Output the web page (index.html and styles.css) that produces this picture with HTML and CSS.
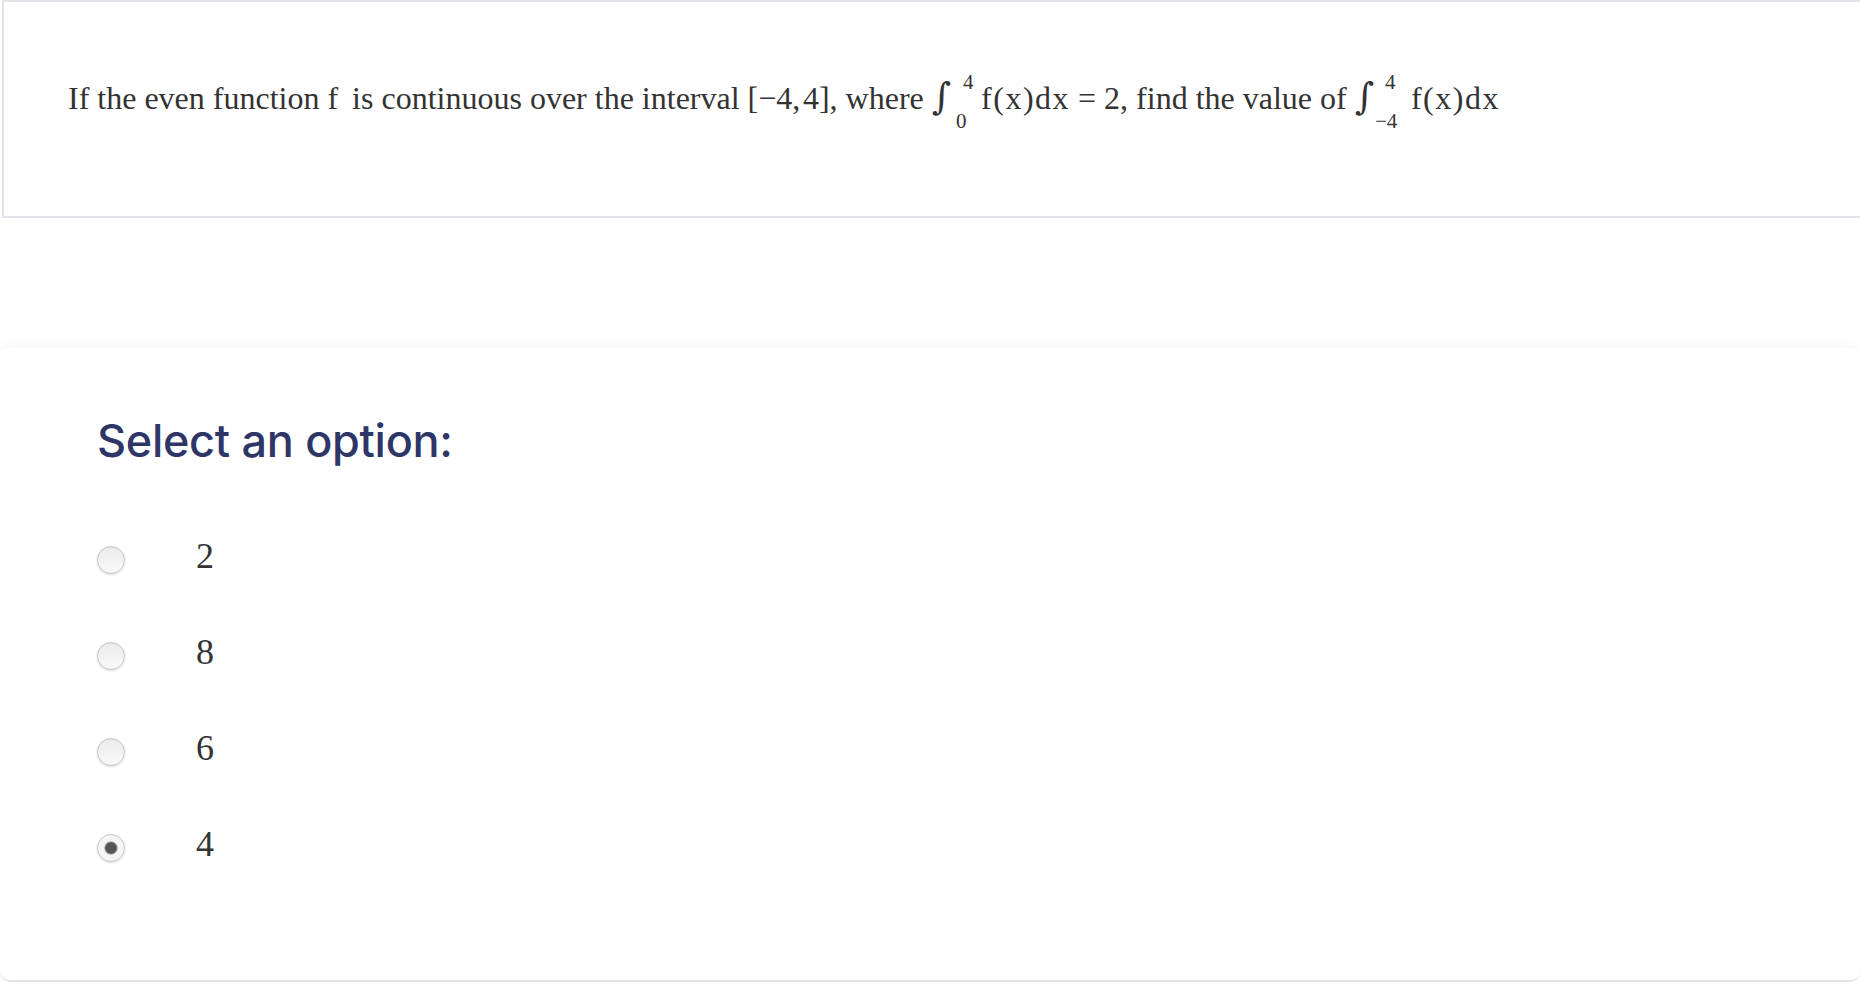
FILE: index.html
```html
<!DOCTYPE html>
<html lang="en">
<head>
    <meta charset="UTF-8">
    <meta name="viewport" content="width=device-width, initial-scale=1.0">
    <title>Question</title>
    <link rel="stylesheet" href="styles.css">
</head>
<body>
    <div class="question">
        <p class="question-text">
            If the even function <span class="fn">f</span> is continuous over the interval [&minus;4,&#8202;4], where
            <span class="int">&int;</span><span class="lim"><span class="sup">4</span><span class="sub">0</span></span><span class="expr">f(x)dx</span> = 2, find the value of
            <span class="int">&int;</span><span class="lim lim-wide"><span class="sup">4</span><span class="sub">&minus;4</span></span><span class="expr">f(x)dx</span>
        </p>
    </div>

    <div class="card">
        <h2 class="card-title">Select an option:</h2>
        <form class="options">
            <label class="option">
                <input type="radio" name="answer" value="2">
                <span class="option-text">2</span>
            </label>
            <label class="option">
                <input type="radio" name="answer" value="8">
                <span class="option-text">8</span>
            </label>
            <label class="option">
                <input type="radio" name="answer" value="6">
                <span class="option-text">6</span>
            </label>
            <label class="option">
                <input type="radio" name="answer" value="4" checked>
                <span class="option-text">4</span>
            </label>
        </form>
    </div>
</body>
</html>
```

FILE: styles.css
```css
html, body {
    margin: 0;
    padding: 0;
    background-color: #ffffff;
    overflow: hidden;
}
body {
    font-family: "Liberation Serif", "Times New Roman", serif;
    color: #333333;
}
.question {
    box-sizing: border-box;
    height: 218px;
    margin-left: 2px;
    border: 2px solid #e1e5e9;
    border-right: none;
    padding: 76px 0 0 64px;
}
.question-text {
    margin: 0;
    font-size: 32px;
    line-height: 40px;
    white-space: nowrap;
    color: #333333;
}
.fn {
    margin-right: 6px;
}
.expr {
    letter-spacing: 1.5px;
}
.int {
    font-family: "DejaVu Serif", serif;
    font-size: 37px;
    line-height: 0;
}
/* integral limits */
.lim {
    display: inline-block;
    position: relative;
    width: 30px;
    height: 10px;
    font-size: 21px;
    line-height: 20px;
}
.lim-wide {
    width: 37px;
}
.lim .sup {
    position: absolute;
    left: 12px;
    top: -27px;
}
.lim .sub {
    position: absolute;
    left: 5px;
    top: 12px;
}
.lim-wide .sup {
    left: 11px;
}
.lim-wide .sub {
    left: 1px;
}
.card {
    box-sizing: border-box;
    height: 634px;
    margin-top: 130px;
    padding: 64px 0 0 97px;
    background-color: #ffffff;
    border-radius: 10px;
    border-bottom: 2px solid #e3e3e3;
    box-shadow: 0 -4px 12px rgba(0, 0, 0, 0.035);
}
.card-title {
    margin: 0;
    font-family: Inter, "Noto Sans", sans-serif;
    font-weight: 500;
    font-size: 45px;
    line-height: 58px;
    letter-spacing: -0.3px;
    color: #2e3667;
}
.options {
    margin-top: 42px;
    display: flex;
    flex-direction: column;
}
.option {
    display: flex;
    align-items: center;
    height: 96px;
    cursor: pointer;
}
.option input {
    -webkit-appearance: none;
    appearance: none;
    margin: 0;
    width: 28px;
    height: 28px;
    border-radius: 50%;
    border: 1px solid #c4c4c4;
    background: linear-gradient(#eaeaea, #fafafa);
    box-shadow: 0 1px 2px rgba(0, 0, 0, 0.15);
}
.option input:checked {
    background: radial-gradient(circle, #555555 0, #555555 5px, #8a8a8a 6px, #f4f4f4 7px, #fafafa 100%);
}
.option-text {
    margin-left: 71px;
    margin-bottom: 8px;
    font-size: 36px;
    line-height: 44px;
    color: #333333;
}
```
